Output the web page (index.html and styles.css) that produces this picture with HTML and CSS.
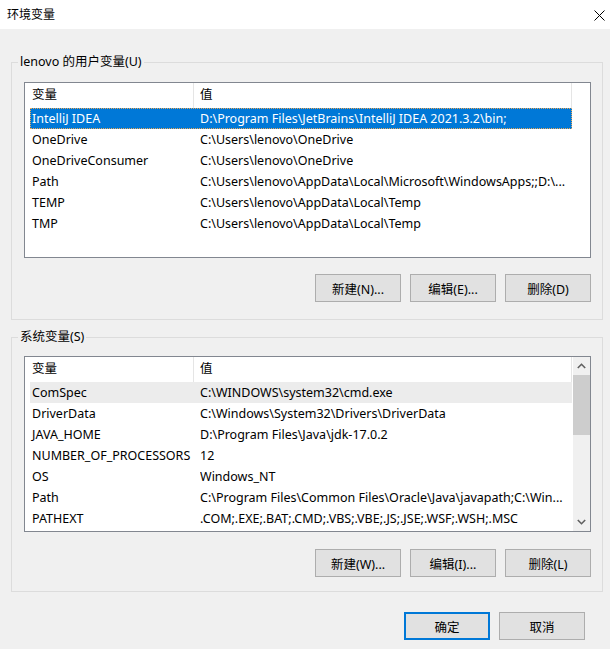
FILE: index.html
```html
<!DOCTYPE html>
<html lang="zh-CN">
<head>
    <meta charset="UTF-8">
    <meta name="viewport" content="width=device-width, initial-scale=1.0">
    <title>环境变量</title>
    <link rel="stylesheet" href="styles.css">
</head>
<body>
    <div class="titlebar">
        <span class="title">环境变量</span>
        <svg class="close" width="11" height="11" viewBox="0 0 11 11">
            <path d="M0.5 0.5 L10.5 10.5 M10.5 0.5 L0.5 10.5" stroke="#000" stroke-width="1" fill="none"/>
        </svg>
    </div>
    <div class="dialog">
        <fieldset class="group">
            <legend>lenovo 的用户变量(U)</legend>
            <div class="list">
                <div class="list-body">
                    <div class="list-head">
                        <div class="head-name">变量</div>
                        <div class="head-value">值</div>
                    </div>
                    <div class="row selected"><span class="cell-name">IntelliJ IDEA</span><span class="cell-value">D:\Program Files\JetBrains\IntelliJ IDEA 2021.3.2\bin;</span></div>
                    <div class="row"><span class="cell-name">OneDrive</span><span class="cell-value">C:\Users\lenovo\OneDrive</span></div>
                    <div class="row"><span class="cell-name">OneDriveConsumer</span><span class="cell-value">C:\Users\lenovo\OneDrive</span></div>
                    <div class="row"><span class="cell-name">Path</span><span class="cell-value">C:\Users\lenovo\AppData\Local\Microsoft\WindowsApps;;D:\...</span></div>
                    <div class="row"><span class="cell-name">TEMP</span><span class="cell-value">C:\Users\lenovo\AppData\Local\Temp</span></div>
                    <div class="row"><span class="cell-name">TMP</span><span class="cell-value">C:\Users\lenovo\AppData\Local\Temp</span></div>
                </div>
            </div>
            <div class="actions">
                <button class="btn">新建(N)...</button>
                <button class="btn">编辑(E)...</button>
                <button class="btn">删除(D)</button>
            </div>
        </fieldset>

        <fieldset class="group system">
            <legend>系统变量(S)</legend>
            <div class="list">
                <div class="list-body">
                    <div class="list-head">
                        <div class="head-name">变量</div>
                        <div class="head-value">值</div>
                    </div>
                    <div class="row hover"><span class="cell-name">ComSpec</span><span class="cell-value">C:\WINDOWS\system32\cmd.exe</span></div>
                    <div class="row"><span class="cell-name">DriverData</span><span class="cell-value">C:\Windows\System32\Drivers\DriverData</span></div>
                    <div class="row"><span class="cell-name">JAVA_HOME</span><span class="cell-value">D:\Program Files\Java\jdk-17.0.2</span></div>
                    <div class="row"><span class="cell-name">NUMBER_OF_PROCESSORS</span><span class="cell-value">12</span></div>
                    <div class="row"><span class="cell-name">OS</span><span class="cell-value">Windows_NT</span></div>
                    <div class="row"><span class="cell-name">Path</span><span class="cell-value">C:\Program Files\Common Files\Oracle\Java\javapath;C:\Win...</span></div>
                    <div class="row"><span class="cell-name">PATHEXT</span><span class="cell-value">.COM;.EXE;.BAT;.CMD;.VBS;.VBE;.JS;.JSE;.WSF;.WSH;.MSC</span></div>
                </div>
                <div class="scrollbar">
                    <div class="arrow">
                        <svg width="9" height="6" viewBox="0 0 9 6"><path d="M0.8 5 L4.5 1.3 L8.2 5" stroke="#606060" stroke-width="1.6" fill="none"/></svg>
                    </div>
                    <div class="thumb"></div>
                    <div class="track"></div>
                    <div class="arrow">
                        <svg width="9" height="6" viewBox="0 0 9 6"><path d="M0.8 1 L4.5 4.7 L8.2 1" stroke="#606060" stroke-width="1.6" fill="none"/></svg>
                    </div>
                </div>
            </div>
            <div class="actions">
                <button class="btn">新建(W)...</button>
                <button class="btn">编辑(I)...</button>
                <button class="btn">删除(L)</button>
            </div>
        </fieldset>

        <div class="footer">
            <button class="btn default">确定</button>
            <button class="btn">取消</button>
        </div>
    </div>
</body>
</html>
```

FILE: styles.css
```css
html {
    background-color: #f0f0f0;
}
body {
    margin: 0;
    font-family: "Noto Sans", "Noto Sans CJK SC", sans-serif;
    font-size: 12.5px;
    color: #000;
}
.titlebar {
    height: 29px;
    background-color: #fff;
    display: flex;
    align-items: center;
    justify-content: space-between;
    padding: 0 5px 0 7px;
}
.title {
    font-size: 12px;
    line-height: 16px;
}
.close {
    display: block;
    margin-top: 1px;
}
.dialog {
    background-color: #f0f0f0;
    padding: 25px 7px 9px 11px;
}
.group {
    margin: 0;
    padding: 0 0 17px 0;
    border: 1px solid #dcdcdc;
    min-width: 0;
}
.group.system {
    margin-top: 9px;
    padding-bottom: 14px;
}
.group legend {
    margin-left: 6px;
    padding: 0 2px;
    line-height: 16px;
}
.list {
    margin: 12px 11px 0 12px;
    height: 176px;
    box-sizing: border-box;
    border: 1px solid #828790;
    background-color: #fff;
    display: flex;
}
.system .list {
    margin-top: 11px;
}
.list-body {
    width: 547px;
}
.list-head {
    display: flex;
    height: 25px;
    line-height: 24px;
}
.head-name {
    width: 169px;
    box-sizing: border-box;
    padding-left: 7px;
    border-right: 1px solid #e5e5e5;
}
.head-value {
    flex: 1;
    padding-left: 6px;
    border-right: 1px solid #e5e5e5;
}
.row {
    display: flex;
    height: 21px;
    line-height: 21px;
    margin-left: 5px;
    white-space: nowrap;
}
.row.selected {
    background-color: #0078d7;
    color: #fff;
    outline: 1px dotted #e8a85a;
    outline-offset: -1px;
}
.row.hover {
    background-color: #ececec;
}
.cell-name {
    width: 170px;
    flex-shrink: 0;
    box-sizing: border-box;
    padding-left: 2px;
    overflow: hidden;
}
.cell-value {
    flex: 1;
    overflow: hidden;
    padding-right: 4px;
}
.scrollbar {
    width: 17px;
    margin-left: 1px;
    background-color: #f0f0f0;
    display: flex;
    flex-direction: column;
}
.arrow {
    height: 18px;
    display: flex;
    align-items: center;
    justify-content: center;
}
.thumb {
    height: 60px;
    background-color: #cdcdcd;
}
.track {
    flex: 1;
}
.actions {
    display: flex;
    justify-content: flex-end;
    gap: 9px;
    margin: 16px 11px 0 0;
}
.system .actions {
    margin-top: 17px;
}
.btn {
    width: 86px;
    height: 28px;
    box-sizing: border-box;
    background-color: #e1e1e1;
    border: 1px solid #adadad;
    border-radius: 0;
    font-family: "Noto Sans", "Noto Sans CJK SC", sans-serif;
    font-size: 12.5px;
    color: #000;
    padding: 0;
}
.btn.default {
    border: 2px solid #0078d7;
}
.footer {
    display: flex;
    justify-content: flex-end;
    gap: 9px;
    margin-top: 20px;
    padding-right: 18px;
}
```
